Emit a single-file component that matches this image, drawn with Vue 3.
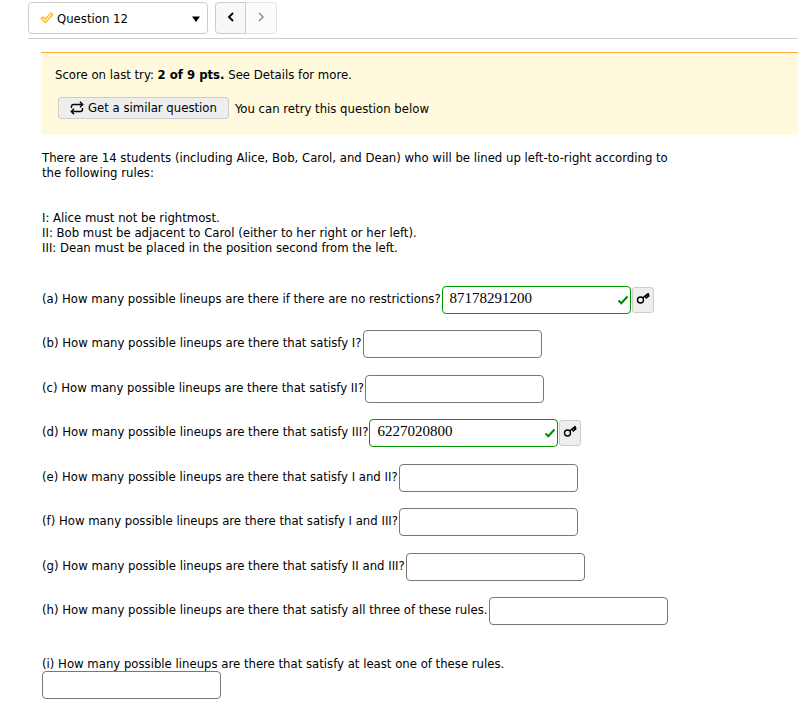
<script setup>
import { ref } from 'vue'

const selected = ref('Question 12')
const rules = [
  'I: Alice must not be rightmost.',
  'II: Bob must be adjacent to Carol (either to her right or her left).',
  'III: Dean must be placed in the position second from the left.',
]
const parts = ref([
  { id: 'a', text: '(a) How many possible lineups are there if there are no restrictions?', value: '87178291200', correct: true },
  { id: 'b', text: '(b) How many possible lineups are there that satisfy I?', value: '' },
  { id: 'c', text: '(c) How many possible lineups are there that satisfy II?', value: '' },
  { id: 'd', text: '(d) How many possible lineups are there that satisfy III?', value: '6227020800', correct: true },
  { id: 'e', text: '(e) How many possible lineups are there that satisfy I and II?', value: '' },
  { id: 'f', text: '(f) How many possible lineups are there that satisfy I and III?', value: '' },
  { id: 'g', text: '(g) How many possible lineups are there that satisfy II and III?', value: '' },
  { id: 'h', text: '(h) How many possible lineups are there that satisfy all three of these rules.', value: '' },
])
const last = ref('')
</script>

<template>
  <div class="page">
    <header class="bar">
      <div class="picker">
        <svg class="tick" viewBox="0 0 14 12" aria-hidden="true">
          <path d="M1.2 6.6 3 4.9 5.2 7 10.8 1.1 12.7 2.8 5.3 10.6Z" />
        </svg>
        <select v-model="selected" aria-label="Question">
          <option>Question 12</option>
        </select>
        <svg class="caret" viewBox="0 0 8 6" aria-hidden="true"><path d="M0 0.5H8L4 6Z" /></svg>
      </div>
      <nav class="pager">
        <button type="button" aria-label="Previous question">
          <svg viewBox="0 0 8 10" aria-hidden="true"><path d="M6 1 2 5 6 9" /></svg>
        </button>
        <button type="button" aria-label="Next question" disabled>
          <svg viewBox="0 0 8 10" aria-hidden="true"><path d="M2 1 6 5 2 9" /></svg>
        </button>
      </nav>
    </header>

    <main>
      <section class="notice">
        <p>Score on last try: <b>2 of 9 pts.</b> See Details for more.</p>
        <div class="retry">
          <button type="button">
            <svg viewBox="0 0 14 14" aria-hidden="true">
              <path d="M1.5 7V5.5Q1.5 3.5 3.5 3.5H12.500M10 .8 12.700 3.5 10 6.200M12.5 7V8.500Q12.500 10.500 10.500 10.500H1.500M4 7.800 1.300 10.500 4 13.200" />
            </svg>
            Get a similar question
          </button>
          <span>You can retry this question below</span>
        </div>
      </section>

      <section class="question">
        <p>There are 14 students (including Alice, Bob, Carol, and Dean) who will be lined up left-to-right according to the following rules:</p>
        <p class="rules">
          <span v-for="rule in rules" :key="rule">{{ rule }}</span>
        </p>
        <div class="parts">
          <div v-for="part in parts" :key="part.id" class="part">
            <label :for="'part-' + part.id">{{ part.text }}</label>
            <span class="answer" :class="{ correct: part.correct }">
              <input :id="'part-' + part.id" v-model="part.value" type="text" />
              <svg v-if="part.correct" viewBox="0 0 12 10" aria-hidden="true"><path d="M1.500 5.500 4.300 8.200 10.500 1.500" /></svg>
            </span>
            <button v-if="part.correct" class="key" type="button" aria-label="Show answer">
              <svg viewBox="0 0 14 14" aria-hidden="true">
                <circle cx="4.500" cy="8" r="3" />
                <path d="M6.700 5.900 12.500 1.300M9 4.200 10.300 5.900 12.800 3.900 12.300 1.500M10.600 3 11.800 4.500" />
              </svg>
            </button>
          </div>
        </div>
        <div class="stacked">
          <label for="part-i">(i) How many possible lineups are there that satisfy at least one of these rules.</label>
          <span class="answer"><input id="part-i" v-model="last" type="text" /></span>
        </div>
      </section>
    </main>
  </div>
</template>

<style>
body {
  background: #fff;
}
</style>

<style scoped>
.page {
  padding: 2px 0 4px 28px;
  color: #000;
  font-family: "DejaVu Sans Condensed", "DejaVu Sans", sans-serif;
  font-size: 13px;
  line-height: 15px;
}
* {
  box-sizing: border-box;
}
p {
  margin: 0;
}
button,
input,
select {
  font: inherit;
  color: inherit;
}
svg {
  fill: none;
  stroke: currentColor;
}
.bar {
  display: flex;
  gap: 7px;
  padding-bottom: 4px;
  border-bottom: 1px solid #ccc;
}
.picker {
  position: relative;
  width: 180px;
}
.picker select {
  display: block;
  width: 100%;
  height: 32px;
  padding: 0 28px;
  appearance: none;
  background: #fff;
  border: 1px solid #ccc;
  border-radius: 4px;
}
.tick {
  position: absolute;
  left: 12px;
  top: 10px;
  width: 14px;
  height: 12px;
  color: #fb1;
  stroke-width: 1.4;
}
.caret {
  position: absolute;
  right: 8px;
  top: 14px;
  width: 8px;
  height: 6px;
  fill: #000;
  stroke: none;
}
.pager {
  display: flex;
}
.pager button {
  display: grid;
  place-items: center;
  width: 31px;
  height: 32px;
  padding: 0 0 2px;
  background: #f8f8f8;
  border: 1px solid #ccc;
  border-radius: 4px 0 0 4px;
}
.pager button:disabled {
  color: #888;
  background: #fcfcfc;
  border-color: #e4e4e4;
  border-left: 0;
  border-radius: 0 4px 4px 0;
}
.pager svg {
  width: 8px;
  height: 10px;
  stroke-width: 1.8;
}
.pager button:disabled svg {
  stroke-width: 1.4;
}
main {
  padding: 13px 0 0 13px;
}
.notice {
  padding: 14px 14px 16px;
  background: #fff9dd;
  border-top: 1px solid #fa3;
}
.retry {
  display: flex;
  align-items: center;
  gap: 6px;
  padding: 15px 0 0 3px;
}
.retry button {
  display: flex;
  align-items: center;
  gap: 4px;
  height: 22px;
  padding: 0 11px 1px;
  background: #eee;
  border: 1px solid #ccc;
  border-radius: 3px;
}
.retry svg {
  width: 14px;
  height: 14px;
  stroke-width: 1.4;
}
.question {
  padding: 15px 0 0 1px;
}
.question > p {
  max-width: 640px;
}
.rules {
  display: grid;
  padding-top: 30px;
}
.parts {
  display: grid;
  grid-auto-rows: 44px 45px;
  padding-top: 31px;
}
.part {
  display: flex;
  align-items: flex-start;
  gap: 1px;
}
.part label {
  padding-top: 5px;
}
.answer {
  position: relative;
  display: block;
  width: 179px;
}
.answer input {
  display: block;
  width: 100%;
  height: 28px;
  padding: 0 7px 4px;
  background: #fff;
  border: 1px solid #777;
  border-radius: 4px;
  font-family: "Liberation Serif", serif;
  font-size: 15px;
}
.answer.correct {
  width: 189px;
}
.correct input {
  border-color: #090;
}
.answer svg {
  position: absolute;
  right: 2px;
  top: 9px;
  width: 12px;
  height: 10px;
  color: #080;
  stroke-width: 2;
}
.key {
  display: grid;
  place-items: center;
  width: 22px;
  height: 26px;
  margin-top: 1px;
  padding: 0 0 2px;
  background: #eee;
  border: 1px solid #ccc;
  border-radius: 3px;
}
.key svg {
  width: 14px;
  height: 14px;
  stroke-width: 1.4;
}
.stacked {
  padding-top: 14px;
}
</style>
